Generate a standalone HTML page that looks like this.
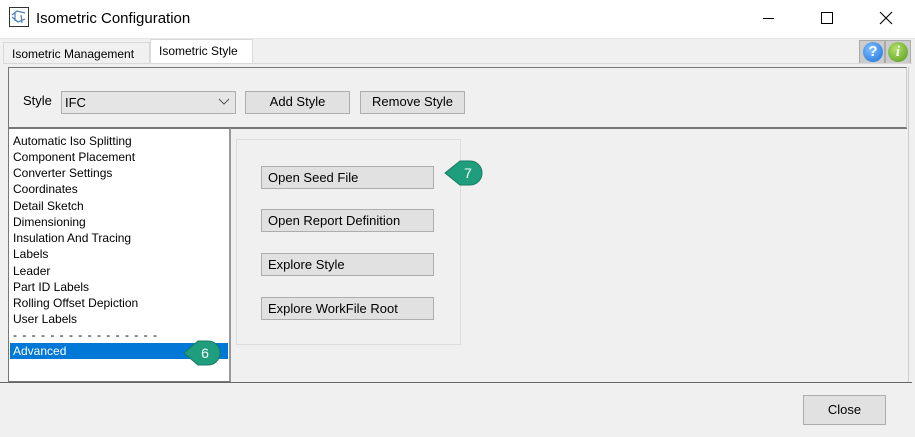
<!DOCTYPE html>
<html><head><style>
*{margin:0;padding:0;box-sizing:border-box}
body{width:915px;height:437px;background:#f0f0f0;font-family:"Liberation Sans",sans-serif;font-size:12px;color:#000;position:relative;overflow:hidden}
.a{position:absolute}
.btn{position:absolute;background:#e1e1e1;border:1px solid #adadad;font-size:13px;padding-left:6px;line-height:20px}
.li{position:absolute;left:13px;font-size:12px;line-height:16.3px}
</style></head><body>
<div class="a" style="left:0;top:0;width:915px;height:38px;background:#fff"></div>
<svg class="a" style="left:9px;top:7px" width="20" height="20" viewBox="0 0 20 20"><rect x="0.5" y="0.5" width="19" height="19" fill="#fff" stroke="#333"/><path d="M3 8 L8 4 L16 6 M3 10 L9 15 L16 12 M6 5 L6 14 M12 8 L13 16" stroke="#4a7fb5" fill="none" stroke-width="1.2"/></svg>
<div class="a" style="left:36px;top:10px;font-size:15px">Isometric Configuration</div>
<div class="a" style="left:763px;top:18px;width:11px;height:1px;background:#000"></div>
<div class="a" style="left:821px;top:12px;width:12px;height:12px;border:1px solid #000"></div>
<svg class="a" style="left:879px;top:11px" width="14" height="14"><path d="M1 1L13 13M13 1L1 13" stroke="#000" stroke-width="1.1"/></svg>
<div class="a" style="left:0;top:38px;width:915px;height:1px;background:#e6e6e6"></div>
<div class="a" style="left:3px;top:42px;width:147px;height:22px;border:1px solid #d9d9d9;border-bottom:none;background:#f0f0f0;font-size:12px;padding:4px 0 0 8px">Isometric Management</div>
<div class="a" style="left:150px;top:39px;width:103px;height:25px;border:1px solid #d9d9d9;border-bottom:none;background:#fff;font-size:12px;padding:4px 0 0 8px">Isometric Style</div>
<div class="a" style="left:859px;top:40px;width:26px;height:24px;background:#ccc;border:1px solid #aaa"></div>
<div class="a" style="left:863px;top:42px;width:20px;height:20px;border-radius:50%;background:radial-gradient(circle at 40% 35%,#7fc0ff,#1b6fd8);color:#fff;font-weight:bold;font-size:15px;text-align:center;line-height:20px">?</div>
<div class="a" style="left:885px;top:40px;width:26px;height:24px;background:#ccc;border:1px solid #aaa"></div>
<div class="a" style="left:888px;top:42px;width:20px;height:20px;border-radius:50%;background:radial-gradient(circle at 40% 35%,#b5e06a,#4f9a1a);color:#fff;font-weight:bold;font-style:italic;font-size:15px;text-align:center;line-height:20px;font-family:'Liberation Serif',serif">i</div>
<div class="a" style="left:3px;top:63px;width:909px;height:1px;background:#d9d9d9"></div>
<div class="a" style="left:8px;top:67px;width:899px;height:61px;border:1px solid #777;border-right-color:#ccc"></div>
<div class="a" style="left:23px;top:93px;font-size:13px">Style</div>
<div class="a" style="left:61px;top:91px;width:175px;height:23px;background:#e5e5e5;border:1px solid #adadad;font-size:13px;padding:3px 0 0 3px">IFC</div>
<svg class="a" style="left:218px;top:98px" width="12" height="8"><path d="M1 1L6 6L11 1" stroke="#555" fill="none"/></svg>
<div class="btn" style="left:245px;top:91px;width:105px;height:23px;text-align:center;padding:0">Add Style</div>
<div class="btn" style="left:360px;top:91px;width:105px;height:23px;text-align:center;padding:0">Remove Style</div>
<div class="a" style="left:8px;top:128px;width:223px;height:254px;background:#fff;border:1px solid #777;border-right:2px solid #999"></div>
<div class="li" style="top:133px">Automatic Iso Splitting</div>
<div class="li" style="top:149px">Component Placement</div>
<div class="li" style="top:165px">Converter Settings</div>
<div class="li" style="top:181px">Coordinates</div>
<div class="li" style="top:198px">Detail Sketch</div>
<div class="li" style="top:214px">Dimensioning</div>
<div class="li" style="top:230px">Insulation And Tracing</div>
<div class="li" style="top:246px">Labels</div>
<div class="li" style="top:263px">Leader</div>
<div class="li" style="top:279px">Part ID Labels</div>
<div class="li" style="top:295px">Rolling Offset Depiction</div>
<div class="li" style="top:311px">User Labels</div>
<div class="li" style="top:327px;letter-spacing:1px">- - - - - - - - - - - - - - - -</div>
<div class="a" style="left:10px;top:343px;width:218px;height:16px;background:#0078d7"></div>
<div class="li" style="top:343px;color:#fff">Advanced</div>
<div class="a" style="left:231px;top:128px;width:676px;height:254px;border-top:1px solid #777"></div>
<div class="a" style="left:236px;top:139px;width:225px;height:206px;border:1px solid #dcdcdc"></div>
<div class="btn" style="left:261px;top:166px;width:173px;height:23px;padding-top:1px">Open Seed File</div>
<div class="btn" style="left:261px;top:209px;width:173px;height:23px;padding-top:1px">Open Report Definition</div>
<div class="btn" style="left:261px;top:253px;width:173px;height:23px;padding-top:1px">Explore Style</div>
<div class="btn" style="left:261px;top:297px;width:173px;height:23px;padding-top:1px">Explore WorkFile Root</div>
<svg class="a" style="left:180px;top:336px" width="45" height="36"><path d="M4 17 L18 5 H28 A12 12 0 0 1 28 29 H18 Z" fill="#1f9e7e" stroke="#167a60" stroke-width="1"/><text x="25" y="22" font-family="Liberation Sans" font-size="14" fill="#fff" text-anchor="middle">6</text></svg>
<svg class="a" style="left:442px;top:156px" width="45" height="36"><path d="M3 17 L18 5 H28 A12 12 0 0 1 28 29 H18 Z" fill="#1f9e7e" stroke="#167a60" stroke-width="1"/><text x="26" y="22" font-family="Liberation Sans" font-size="14" fill="#fff" text-anchor="middle">7</text></svg>
<div class="a" style="left:0;top:382px;width:912px;height:1px;background:#666"></div>
<div class="a" style="left:908px;top:67px;width:1px;height:315px;background:#ccc"></div>
<div class="btn" style="left:803px;top:395px;width:83px;height:30px;text-align:center;padding:0;line-height:28px;font-size:13px">Close</div>
</body></html>
